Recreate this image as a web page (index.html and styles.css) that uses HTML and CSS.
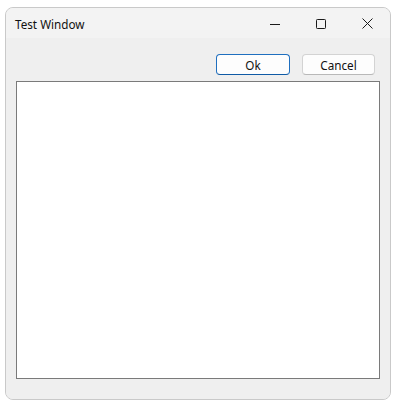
FILE: index.html
```html
<!DOCTYPE html>
<html>
<head>
<meta charset="utf-8">
<link rel="stylesheet" href="styles.css">
</head>
<body>
<div class="window">
  <div class="titlebar">
    <span class="title">Test Window</span>
    <div class="controls">
      <div class="ctl"><svg width="10" height="10" viewBox="0 0 10 10"><path d="M0 5.5H10" stroke="#1a1a1a" stroke-width="1"/></svg></div>
      <div class="ctl"><svg width="10" height="10" viewBox="0 0 10 10"><rect x="0.5" y="0.5" width="9" height="9" rx="0.8" fill="none" stroke="#1a1a1a" stroke-width="1"/></svg></div>
      <div class="ctl"><svg width="11" height="11" viewBox="0 0 11 11"><path d="M0.5 0.5L10.5 10.5M10.5 0.5L0.5 10.5" stroke="#1a1a1a" stroke-width="1"/></svg></div>
    </div>
  </div>
  <div class="content">
    <div class="toolbar">
      <button class="btn primary">Ok</button>
      <button class="btn">Cancel</button>
    </div>
    <div class="panel"></div>
  </div>
</div>
</body>
</html>
```
FILE: styles.css
```css
html, body {
  margin: 0;
  padding: 0;
  background: #ffffff;
}
body {
  width: 398px;
  height: 405px;
  font-family: "Noto Sans", "Open Sans", sans-serif;
}
.window {
  position: absolute;
  left: 5px;
  top: 7px;
  width: 384px;
  height: 391px;
  border: 1px solid #c9c9c9;
  border-radius: 8px;
  background: #efefef;
  display: flex;
  flex-direction: column;
  overflow: hidden;
}
.titlebar {
  height: 30px;
  display: flex;
  align-items: center;
  justify-content: space-between;
  background: #f3f3f3;
}
.title {
  padding-left: 9px;
  font-size: 11.7px;
  color: #111111;
  margin-top: 1px;
}
.controls {
  display: flex;
  height: 100%;
}
.ctl {
  width: 46px;
  height: 100%;
  display: flex;
  align-items: center;
  justify-content: center;
  padding-top: 1px;
  box-sizing: border-box;
}
.content {
  flex: 1;
  display: flex;
  flex-direction: column;
  padding: 16px 10px 20px 10px;
  background: #efefef;
}
.toolbar {
  display: flex;
  justify-content: flex-end;
  gap: 12px;
  padding-right: 5px;
  margin-bottom: 6px;
}
.btn {
  width: 73px;
  height: 21px;
  border: 1px solid #d3d3d3;
  border-bottom-color: #b8b8b8;
  border-radius: 4px;
  background: #fdfdfd;
  font-family: "Noto Sans", "Open Sans", sans-serif;
  font-size: 11.7px;
  color: #111111;
  padding: 0;
  line-height: 18px;
}
.btn.primary {
  width: 74px;
  border-color: #1f6fbf;
  border-bottom-color: #0f5aa5;
}
.panel {
  flex: 1;
  background: #ffffff;
  border: 1px solid #7a7a7a;
}
```
